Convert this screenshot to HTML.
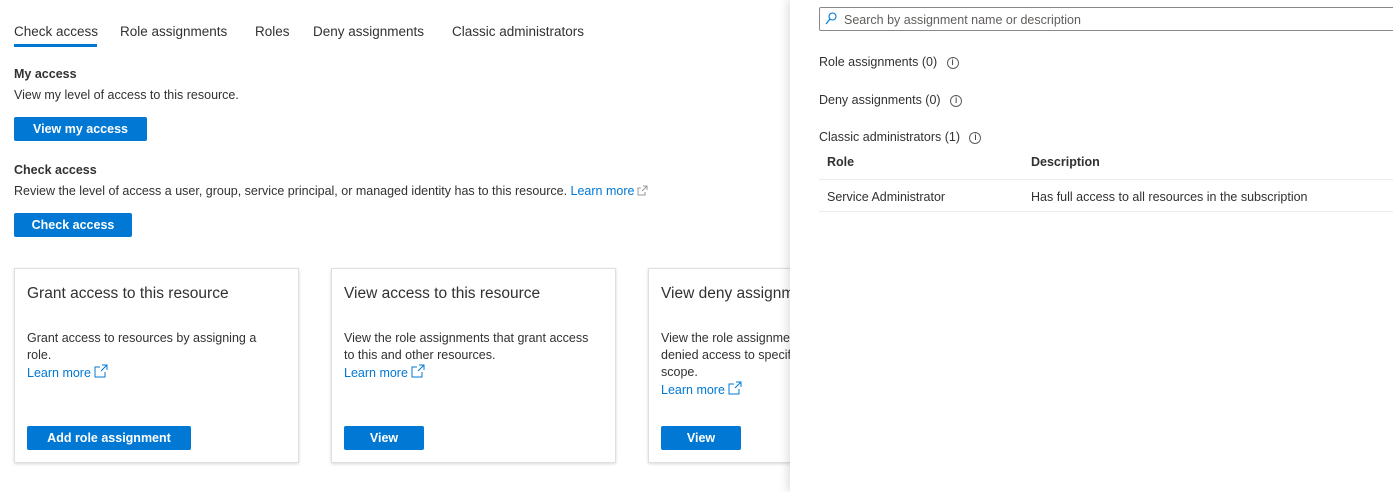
<!DOCTYPE html>
<html><head><meta charset="utf-8"><style>
*{margin:0;padding:0;box-sizing:border-box}
body{width:1393px;height:492px;overflow:hidden;background:#fff;font-family:"Liberation Sans",sans-serif;font-size:12.5px;color:#323130;position:relative}
.a{position:absolute;white-space:nowrap}
.tab{font-size:13.5px;top:24px}
.b{font-weight:bold}
.btn{position:absolute;background:#0078d4;color:#fff;font-weight:bold;font-size:12.5px;height:24px;line-height:24px;text-align:center;border-radius:2px}
.link{color:#0078d4}
.card{position:absolute;top:268px;width:285px;height:195px;border:1px solid #e1dfdd;box-shadow:0 1px 3px rgba(0,0,0,.15);background:#fff;overflow:hidden}
.card h3{position:absolute;left:12px;top:16px;font-size:15.5px;font-weight:normal;white-space:nowrap}
.card p{position:absolute;left:12px;top:61px;width:300px;line-height:17px;white-space:nowrap}
.panel{position:absolute;left:790px;top:0;width:603px;height:492px;background:#fff;box-shadow:-3px 0 8px rgba(0,0,0,.12)}
.ext{display:inline-block;width:11px;height:11px;vertical-align:-1px;margin-left:3px}
.i{margin-left:6px;font-size:10px;border:1px solid #605e5c;border-radius:50%;display:inline-block;width:12px;height:12px;text-align:center;line-height:10px;vertical-align:1px}
</style></head><body>
<div class="a tab" style="left:14px">Check access</div>
<div class="a" style="left:14px;top:44px;width:83px;height:3px;background:#0078d4"></div>
<div class="a tab" style="left:120px">Role assignments</div>
<div class="a tab" style="left:255px">Roles</div>
<div class="a tab" style="left:313px">Deny assignments</div>
<div class="a tab" style="left:452px">Classic administrators</div>

<div class="a b" style="left:14px;top:67px">My access</div>
<div class="a" style="left:14px;top:88px">View my level of access to this resource.</div>
<div class="btn" style="left:14px;top:117px;width:133px">View my access</div>
<div class="a b" style="left:14px;top:163px">Check access</div>
<div class="a" style="left:14px;top:184px">Review the level of access a user, group, service principal, or managed identity has to this resource. <span class="link">Learn more</span><svg class="ext" viewBox="0 0 11 11"><path d="M6 1h4v4M10 1L5 6M8 7v3H1V3h3" fill="none" stroke="#999" stroke-width="1"/></svg></div>
<div class="btn" style="left:14px;top:213px;width:118px">Check access</div>

<div class="card" style="left:14px"><h3>Grant access to this resource</h3>
<p>Grant access to resources by assigning a<br>role.<br><span class="link">Learn more<svg class="ext" style="width:14px;height:14px" viewBox="0 0 14 14"><path d="M8 1h5v5M13 1L7 7M11 8v5H1V3h5" fill="none" stroke="#0078d4" stroke-width="1"/></svg></span></p>
<div class="btn" style="left:12px;top:157px;width:164px">Add role assignment</div></div>
<div class="card" style="left:331px"><h3>View access to this resource</h3>
<p>View the role assignments that grant access<br>to this and other resources.<br><span class="link">Learn more<svg class="ext" style="width:14px;height:14px" viewBox="0 0 14 14"><path d="M8 1h5v5M13 1L7 7M11 8v5H1V3h5" fill="none" stroke="#0078d4" stroke-width="1"/></svg></span></p>
<div class="btn" style="left:12px;top:157px;width:80px">View</div></div>
<div class="card" style="left:648px"><h3>View deny assignments</h3>
<p>View the role assignments that have been<br>denied access to specific actions at this<br>scope.<br><span class="link">Learn more<svg class="ext" style="width:14px;height:14px" viewBox="0 0 14 14"><path d="M8 1h5v5M13 1L7 7M11 8v5H1V3h5" fill="none" stroke="#0078d4" stroke-width="1"/></svg></span></p>
<div class="btn" style="left:12px;top:157px;width:80px">View</div></div>

<div class="panel">
<div class="a" style="left:29px;top:7px;width:580px;height:24px;border:1px solid #8a8886;border-radius:2px"></div>
<svg class="a" style="left:35px;top:12px" width="12" height="13" viewBox="0 0 12 13"><circle cx="7.5" cy="4.5" r="3.5" fill="none" stroke="#0078d4" stroke-width="1.1"/><path d="M5 7L1 12" stroke="#0078d4" stroke-width="1.2"/></svg>
<div class="a" style="left:54px;top:13px;color:#605e5c">Search by assignment name or description</div>
<div class="a" style="left:29px;top:55px">Role assignments (0) <span class="i">i</span></div>
<div class="a" style="left:29px;top:93px">Deny assignments (0) <span class="i">i</span></div>
<div class="a" style="left:29px;top:130px">Classic administrators (1) <span class="i">i</span></div>
<div class="a b" style="left:37px;top:155px">Role</div>
<div class="a b" style="left:241px;top:155px">Description</div>
<div class="a" style="left:29px;top:179px;width:580px;height:1px;background:#edebe9"></div>
<div class="a" style="left:37px;top:190px">Service Administrator</div>
<div class="a" style="left:241px;top:190px">Has full access to all resources in the subscription</div>
<div class="a" style="left:29px;top:211px;width:580px;height:1px;background:#edebe9"></div>
</div>
</body></html>
